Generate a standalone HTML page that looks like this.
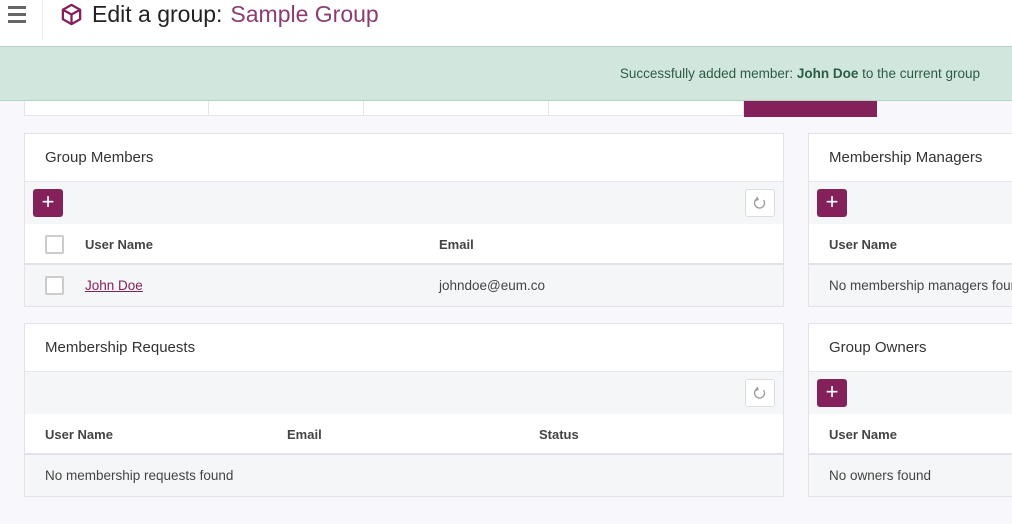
<!DOCTYPE html>
<html><head><meta charset="utf-8"><style>
*{box-sizing:border-box;margin:0;padding:0}
body{width:1012px;height:524px;overflow:hidden;background:#f8f8fc;font-family:"Liberation Sans",sans-serif;color:#444;position:relative}
.top{position:absolute;left:0;top:0;width:1012px;height:46px;background:#fff}
.ham{position:absolute;left:8px;top:6px;width:18px}
.ham i{display:block;height:3px;background:#666;margin-bottom:4px}
.vl{position:absolute;left:42px;top:0;width:1px;height:40px;background:#eee}
.title{position:absolute;left:92px;top:1px;font-size:23px;color:#222}
.title span{color:#8a3d72;margin-left:8px}
.alert{position:absolute;left:0;top:46px;width:1012px;height:55px;background:#d1e6dc;border-top:1px solid #b5d3c5;border-bottom:1px solid #b5d3c5;z-index:3;font-size:13.5px;color:#2d5c46}
.alert div{position:absolute;right:32px;top:19px}
.tabs{position:absolute;left:24px;top:90px;height:26px;width:852px;background:#fff;border:1px solid #e4e4ec}
.tab{position:absolute;top:0;height:25px;border-right:1px solid #e4e4ec}
.card{position:absolute;background:#fff;border:1px solid #e2e2ea;overflow:hidden}
.ch{height:47px;padding:15px 20px;font-size:15px;color:#333}
.tb{height:43px;background:#f5f6f8;border-top:1px solid #e6e6ee;position:relative}
.plus{position:absolute;left:8px;top:7px;width:30px;height:28px;background:#85215a;border-radius:3px;color:#fff;font-size:22px;line-height:26px;text-align:center;font-weight:300}
.ref{position:absolute;right:8px;top:7px;width:30px;height:28px;background:#fff;border:1px solid #ddd;border-radius:3px}
.th{height:41px;border-bottom:2px solid #e2e2ea;position:relative;font-size:13px;font-weight:bold;color:#444}
.tr{height:41px;background:#f5f6f8;position:relative;font-size:13.5px;color:#444}
.c{position:absolute;top:13px}
.cb{position:absolute;left:20px;top:11px;width:19px;height:19px;border:2px solid #ccc;border-radius:2px;background:#fff}
</style></head><body>
<div class="top"><div class="ham"><i></i><i></i><i></i></div><div class="vl"></div>
<svg style="position:absolute;left:60px;top:3px" width="23" height="23" viewBox="0 0 24 24" fill="none" stroke="#85215a" stroke-width="2.4" stroke-linejoin="round"><path d="M12 2l9 5v10l-9 5-9-5V7z"/><path d="M3 7l9 5 9-5M12 12v10"/></svg>
<div class="title">Edit a group:<span>Sample Group</span></div></div>
<div class="alert"><div>Successfully added member: <b>John Doe</b> to the current group</div></div>
<div class="tabs"><div class="tab" style="left:0;width:184px"></div><div class="tab" style="left:184px;width:155px"></div><div class="tab" style="left:339px;width:185px"></div><div class="tab" style="left:524px;width:195px"></div><div style="position:absolute;left:719px;top:-1px;width:133px;height:27px;background:#85215a"></div></div>

<div class="card" style="left:24px;top:133px;width:760px;height:174px">
<div class="ch">Group Members</div>
<div class="tb"><div class="plus">+</div><div class="ref"><svg width="28" height="26" viewBox="0 0 28 26"><path d="M17.5 10a5 5 0 1 1-6-1.5" fill="none" stroke="#999" stroke-width="1.3"/><path d="M11 7l1 2.5-2.5 1" fill="none" stroke="#999" stroke-width="1.3"/></svg></div></div>
<div class="th"><div class="cb"></div><div class="c" style="left:60px">User Name</div><div class="c" style="left:414px">Email</div></div>
<div class="tr"><div class="cb"></div><div class="c" style="left:60px;color:#85215a;text-decoration:underline">John Doe</div><div class="c" style="left:414px">johndoe@eum.co</div></div>
</div>

<div class="card" style="left:24px;top:323px;width:760px;height:174px">
<div class="ch">Membership Requests</div>
<div class="tb"><div class="ref"><svg width="28" height="26" viewBox="0 0 28 26"><path d="M17.5 10a5 5 0 1 1-6-1.5" fill="none" stroke="#999" stroke-width="1.3"/><path d="M11 7l1 2.5-2.5 1" fill="none" stroke="#999" stroke-width="1.3"/></svg></div></div>
<div class="th"><div class="c" style="left:20px">User Name</div><div class="c" style="left:262px">Email</div><div class="c" style="left:514px">Status</div></div>
<div class="tr"><div class="c" style="left:20px">No membership requests found</div></div>
</div>

<div class="card" style="left:808px;top:133px;width:220px;height:174px">
<div class="ch">Membership Managers</div>
<div class="tb"><div class="plus">+</div></div>
<div class="th"><div class="c" style="left:20px">User Name</div></div>
<div class="tr"><div class="c" style="left:20px;white-space:nowrap">No membership managers found</div></div>
</div>

<div class="card" style="left:808px;top:323px;width:220px;height:174px">
<div class="ch">Group Owners</div>
<div class="tb"><div class="plus">+</div></div>
<div class="th"><div class="c" style="left:20px">User Name</div></div>
<div class="tr"><div class="c" style="left:20px">No owners found</div></div>
</div>
</body></html>
